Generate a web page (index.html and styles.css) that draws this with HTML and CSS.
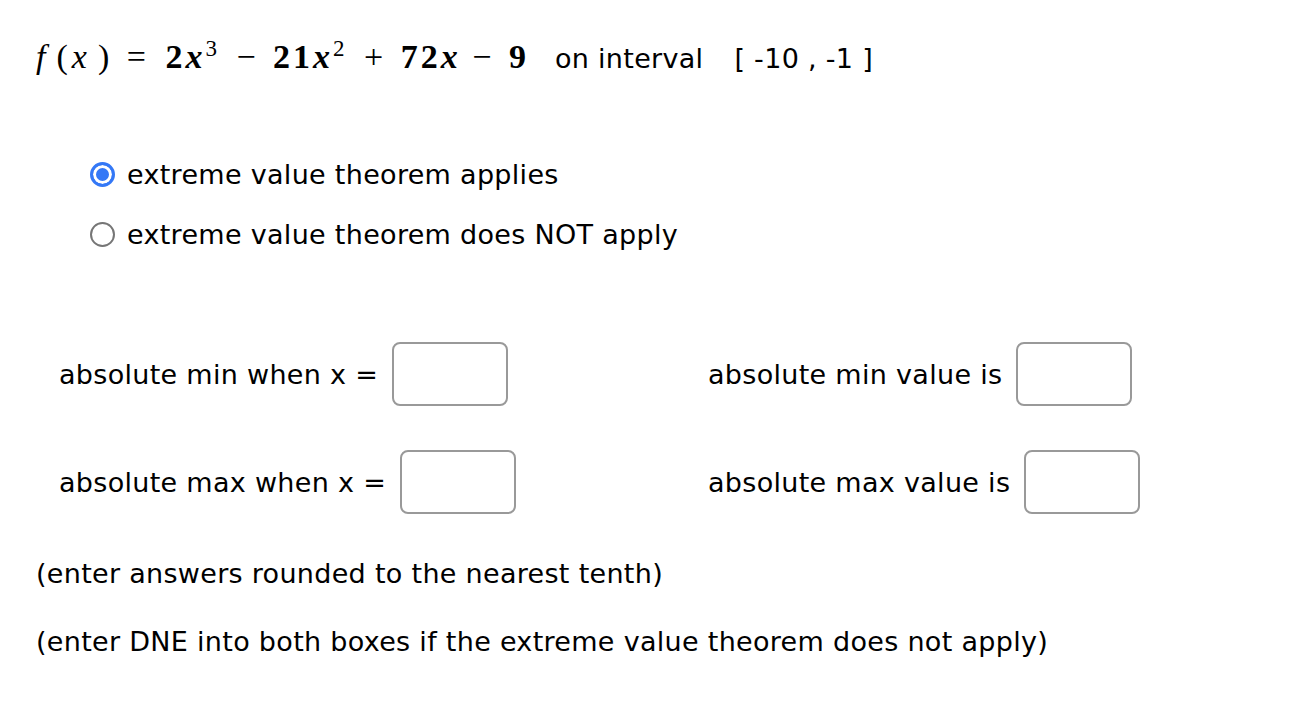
FILE: index.html
```html
<!DOCTYPE html>
<html lang="en">
<head>
    <meta charset="UTF-8">
    <title>Extreme Value Theorem</title>
    <link rel="stylesheet" href="styles.css">
</head>
<body>
    <div class="question">
        <span class="math">
            <i>f</i><span class="paren">(</span><i class="arg">x</i><span class="paren">)</span>
            <span class="op eq">=</span>
            <b>2<i>x</i><sup>3</sup></b>
            <span class="op">&minus;</span>
            <b>21<i>x</i><sup>2</sup></b>
            <span class="op">+</span>
            <b>72<i class="last">x</i></b>
            <span class="op">&minus;</span>
            <b>9</b>
        </span>
        <span class="interval-label">on interval</span>
        <span class="interval">[ -10 , -1 ]</span>
    </div>

    <div class="choices">
        <label class="choice">
            <input type="radio" name="evt" checked>
            extreme value theorem applies
        </label>
        <label class="choice">
            <input type="radio" name="evt">
            extreme value theorem does NOT apply
        </label>
    </div>

    <div class="answers">
        <div class="answer">
            <span>absolute min when x =</span>
            <input type="text" class="box">
        </div>
        <div class="answer">
            <span>absolute min value is</span>
            <input type="text" class="box">
        </div>
        <div class="answer">
            <span>absolute max when x =</span>
            <input type="text" class="box">
        </div>
        <div class="answer">
            <span>absolute max value is</span>
            <input type="text" class="box">
        </div>
    </div>

    <p class="note">(enter answers rounded to the nearest tenth)</p>
    <p class="note">(enter DNE into both boxes if the extreme value theorem does not apply)</p>
</body>
</html>
```

FILE: styles.css
```css
body {
    font-family: 'DejaVu Sans', sans-serif;
    font-size: 27px;
    letter-spacing: 0.3px;
    color: #000;
    background-color: white;
    margin: 0;
    padding: 38px 0 0 36px;
}

.question {
    display: flex;
    align-items: baseline;
    height: 50px;
}

.math {
    font-family: 'Liberation Serif', serif;
    font-size: 34px;
    letter-spacing: 1px;
    white-space: nowrap;
}

.paren {
    margin-left: 10px;
}

.arg {
    margin-left: 3px;
}

.math b {
    font-weight: bold;
    letter-spacing: 3px;
}

.math .last {
    margin-right: -5px;
}

.math sup {
    font-size: 23px;
    font-weight: normal;
    line-height: 0;
}

.op {
    margin: 0 7px;
}

.eq {
    margin: 0 9px 0 7px;
}

.interval-label {
    margin-left: 26px;
}

.interval {
    margin-left: 31px;
}

.choices {
    margin: 56px 0 0 54px;
}

.choice {
    display: flex;
    align-items: center;
    gap: 12px;
    height: 60px;
}

.choice input {
    appearance: none;
    width: 25px;
    height: 25px;
    margin: 0;
    border: 2px solid #767676;
    border-radius: 50%;
    background-color: white;
}

.choice input:checked {
    border: 3px solid #3478f6;
    background-color: #3478f6;
    box-shadow: inset 0 0 0 3px white;
}

.answers {
    display: grid;
    grid-template-columns: 649px auto;
    row-gap: 44px;
    margin: 78px 0 0 23px;
}

.answer {
    display: flex;
    align-items: center;
    gap: 14px;
}

.box {
    box-sizing: border-box;
    width: 116px;
    height: 64px;
    margin: 0;
    border: 2px solid #999;
    border-radius: 8px;
}

.note {
    margin: 44px 0 0 0;
}

.note + .note {
    margin-top: 37px;
}
```
